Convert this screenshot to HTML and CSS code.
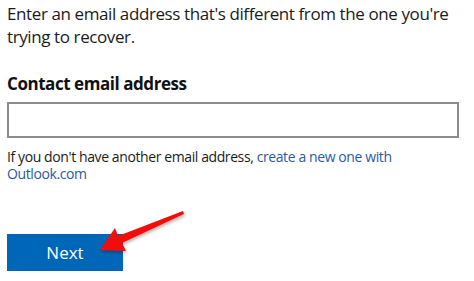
FILE: index.html
```html
<!DOCTYPE html>
<html>
<head>
<meta charset="utf-8">
<link rel="stylesheet" href="styles.css">
</head>
<body>
<main class="page">
  <p class="intro">Enter an email address that's different from the one you're trying to recover.</p>
  <label class="label" for="email">Contact email address</label>
  <input class="field" id="email" type="text">
  <p class="help">If you don't have another email address, <a class="link" href="#">create a new one with Outlook.com</a></p>
  <button class="next">Next</button>
</main>
<svg class="arrow" width="474" height="281" viewBox="0 0 474 281">
  <defs>
    <filter id="sh" x="-20%" y="-20%" width="140%" height="140%">
      <feDropShadow dx="1" dy="2" stdDeviation="1.5" flood-color="#000" flood-opacity="0.3"/>
    </filter>
  </defs>
  <polygon points="100,250 115,228 118,236 183,211 184,214 122,243 126,251" fill="#f20d0d" filter="url(#sh)"/>
</svg>
</body>
</html>
```
FILE: styles.css
```css
html, body {
  margin: 0;
  padding: 0;
  background: #fff;
}
body {
  width: 474px;
  height: 281px;
  overflow: hidden;
  position: relative;
  font-family: "Open Sans", "Noto Sans", sans-serif;
  color: #1b1b1b;
}
.page {
  padding: 2px 0 0 7px;
  display: flex;
  flex-direction: column;
  align-items: flex-start;
}
.intro {
  margin: 0;
  font-size: 17px;
  line-height: 23px;
  letter-spacing: -0.4px;
  width: 462px;
}
.label {
  margin-top: 24px;
  font-size: 17px;
  font-weight: 700;
  line-height: 23px;
  letter-spacing: -0.45px;
  color: #111;
}
.field {
  margin: 7px 0 0 0;
  box-sizing: border-box;
  width: 452px;
  height: 36px;
  border: 2px solid #8c8c8c;
  background: #fff;
  padding: 0;
}
.help {
  margin: 10px 0 0 0;
  font-size: 14px;
  line-height: 17px;
  letter-spacing: -0.4px;
  width: 400px;
}
.link {
  color: #2a5aa7;
  text-decoration: none;
}
.next {
  margin-top: 52px;
  width: 116px;
  height: 37px;
  border: none;
  background: #0067b8;
  color: #fff;
  font-family: "Open Sans", "Noto Sans", sans-serif;
  font-size: 17px;
  padding: 0;
}
.arrow {
  position: absolute;
  left: 0;
  top: 0;
  pointer-events: none;
}
```
